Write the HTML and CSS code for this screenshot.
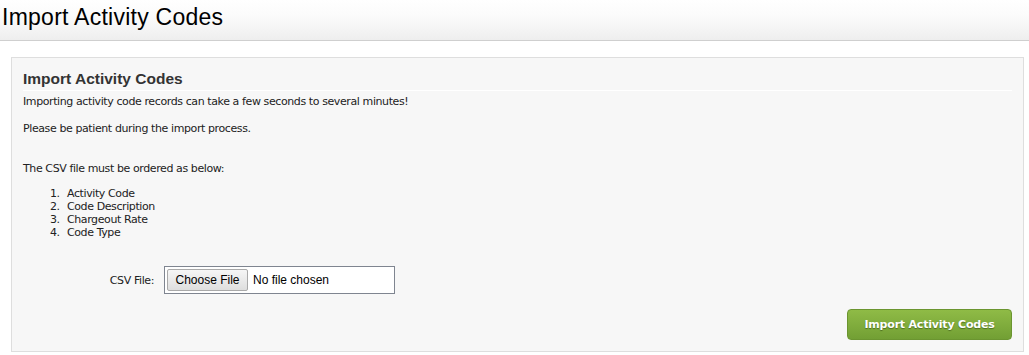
FILE: index.html
```html
<!DOCTYPE html>
<html>
<head>
<meta charset="utf-8">
<link rel="stylesheet" href="styles.css">
</head>
<body>
<div class="page-header"><h1 class="page-title">Import Activity Codes</h1></div>
<div class="content">
  <div class="panel">
    <h2 class="panel-title">Import Activity Codes</h2>
    <p class="text first">Importing activity code records can take a few seconds to several minutes!</p>
    <p class="text second">Please be patient during the import process.</p>
    <p class="text third">The CSV file must be ordered as below:</p>
    <ol class="list">
      <li>Activity Code</li>
      <li>Code Description</li>
      <li>Chargeout Rate</li>
      <li>Code Type</li>
    </ol>
    <div class="form-row">
      <label class="label">CSV File:</label>
      <div class="file-box"><span class="file-btn">Choose File</span><span class="file-name">No file chosen</span></div>
    </div>
    <div class="actions"><button class="btn">Import Activity Codes</button></div>
  </div>
</div>
</body>
</html>
```
FILE: styles.css
```css
html, body { margin: 0; padding: 0; background: #fff; }
body { font-family: "DejaVu Sans", Verdana, sans-serif; font-size: 11px; color: #222; }
.page-header {
  height: 40px;
  border-bottom: 1px solid #cfcfcf;
  background: linear-gradient(#ffffff 0%, #fbfbfb 40%, #eeeeee 100%);
  display: flex; align-items: center;
}
.page-title {
  margin: 0 0 5px 2px;
  font-family: "Liberation Sans", Arial, sans-serif;
  font-weight: normal; font-size: 23px; letter-spacing: 0.25px; color: #000;
}
.content { padding: 16px 5px 0 11px; }
.panel {
  border: 1px solid #dedede;
  background: #f7f7f7;
  padding: 12px 11px 11px 11px;
  height: 270px;
  display: flex; flex-direction: column;
}
.panel-title {
  margin: 0;
  font-family: "Liberation Sans", Arial, sans-serif;
  font-size: 15.5px; line-height: 18px; font-weight: bold; color: #333;
  padding-bottom: 2px;
  border-bottom: 1px solid #fff;
}
.text { margin: 0; line-height: 14px; letter-spacing: -0.4px; }
.first { margin-top: 4px; }
.second { margin-top: 13px; }
.third { margin-top: 26px; }
.list { margin: 11px 0 0 0; padding-left: 27px; line-height: 13px; letter-spacing: -0.4px; list-style: none; counter-reset: item; }
.list li { counter-increment: item; display: flex; }
.list li::before { content: counter(item) "."; width: 17px; flex: none; }
.form-row { display: flex; align-items: center; margin-top: 27px; }
.label { width: 131px; text-align: right; letter-spacing: -0.4px; }
.file-box {
  margin-left: 10px;
  width: 227px; height: 26px;
  border: 1px solid #7f8590; background: #fff;
  display: flex; align-items: center; padding-left: 2px;
  font-family: "Liberation Sans", Arial, sans-serif; font-size: 12px; color: #000;
}
.file-btn {
  height: 22px; width: 81px; box-sizing: border-box;
  border: 1px solid #a9a9a9; border-radius: 2px;
  background: linear-gradient(#f6f6f6, #dedede);
  display: flex; align-items: center; justify-content: center;
  font-size: 12px;
  line-height: 1;
}
.file-name { margin-left: 5px; }
.actions { margin-top: auto; display: flex; justify-content: flex-end; }
.btn {
  width: 165px; height: 31px;
  border: 1px solid #6b9530; border-radius: 4px;
  background: linear-gradient(#8fbb46, #729f34);
  color: #fff; font-family: "DejaVu Sans", Verdana, sans-serif; font-weight: bold; font-size: 11px;
  letter-spacing: -0.2px;
  text-shadow: 0 1px 1px #4d6d20;
  padding: 0;
}
```
